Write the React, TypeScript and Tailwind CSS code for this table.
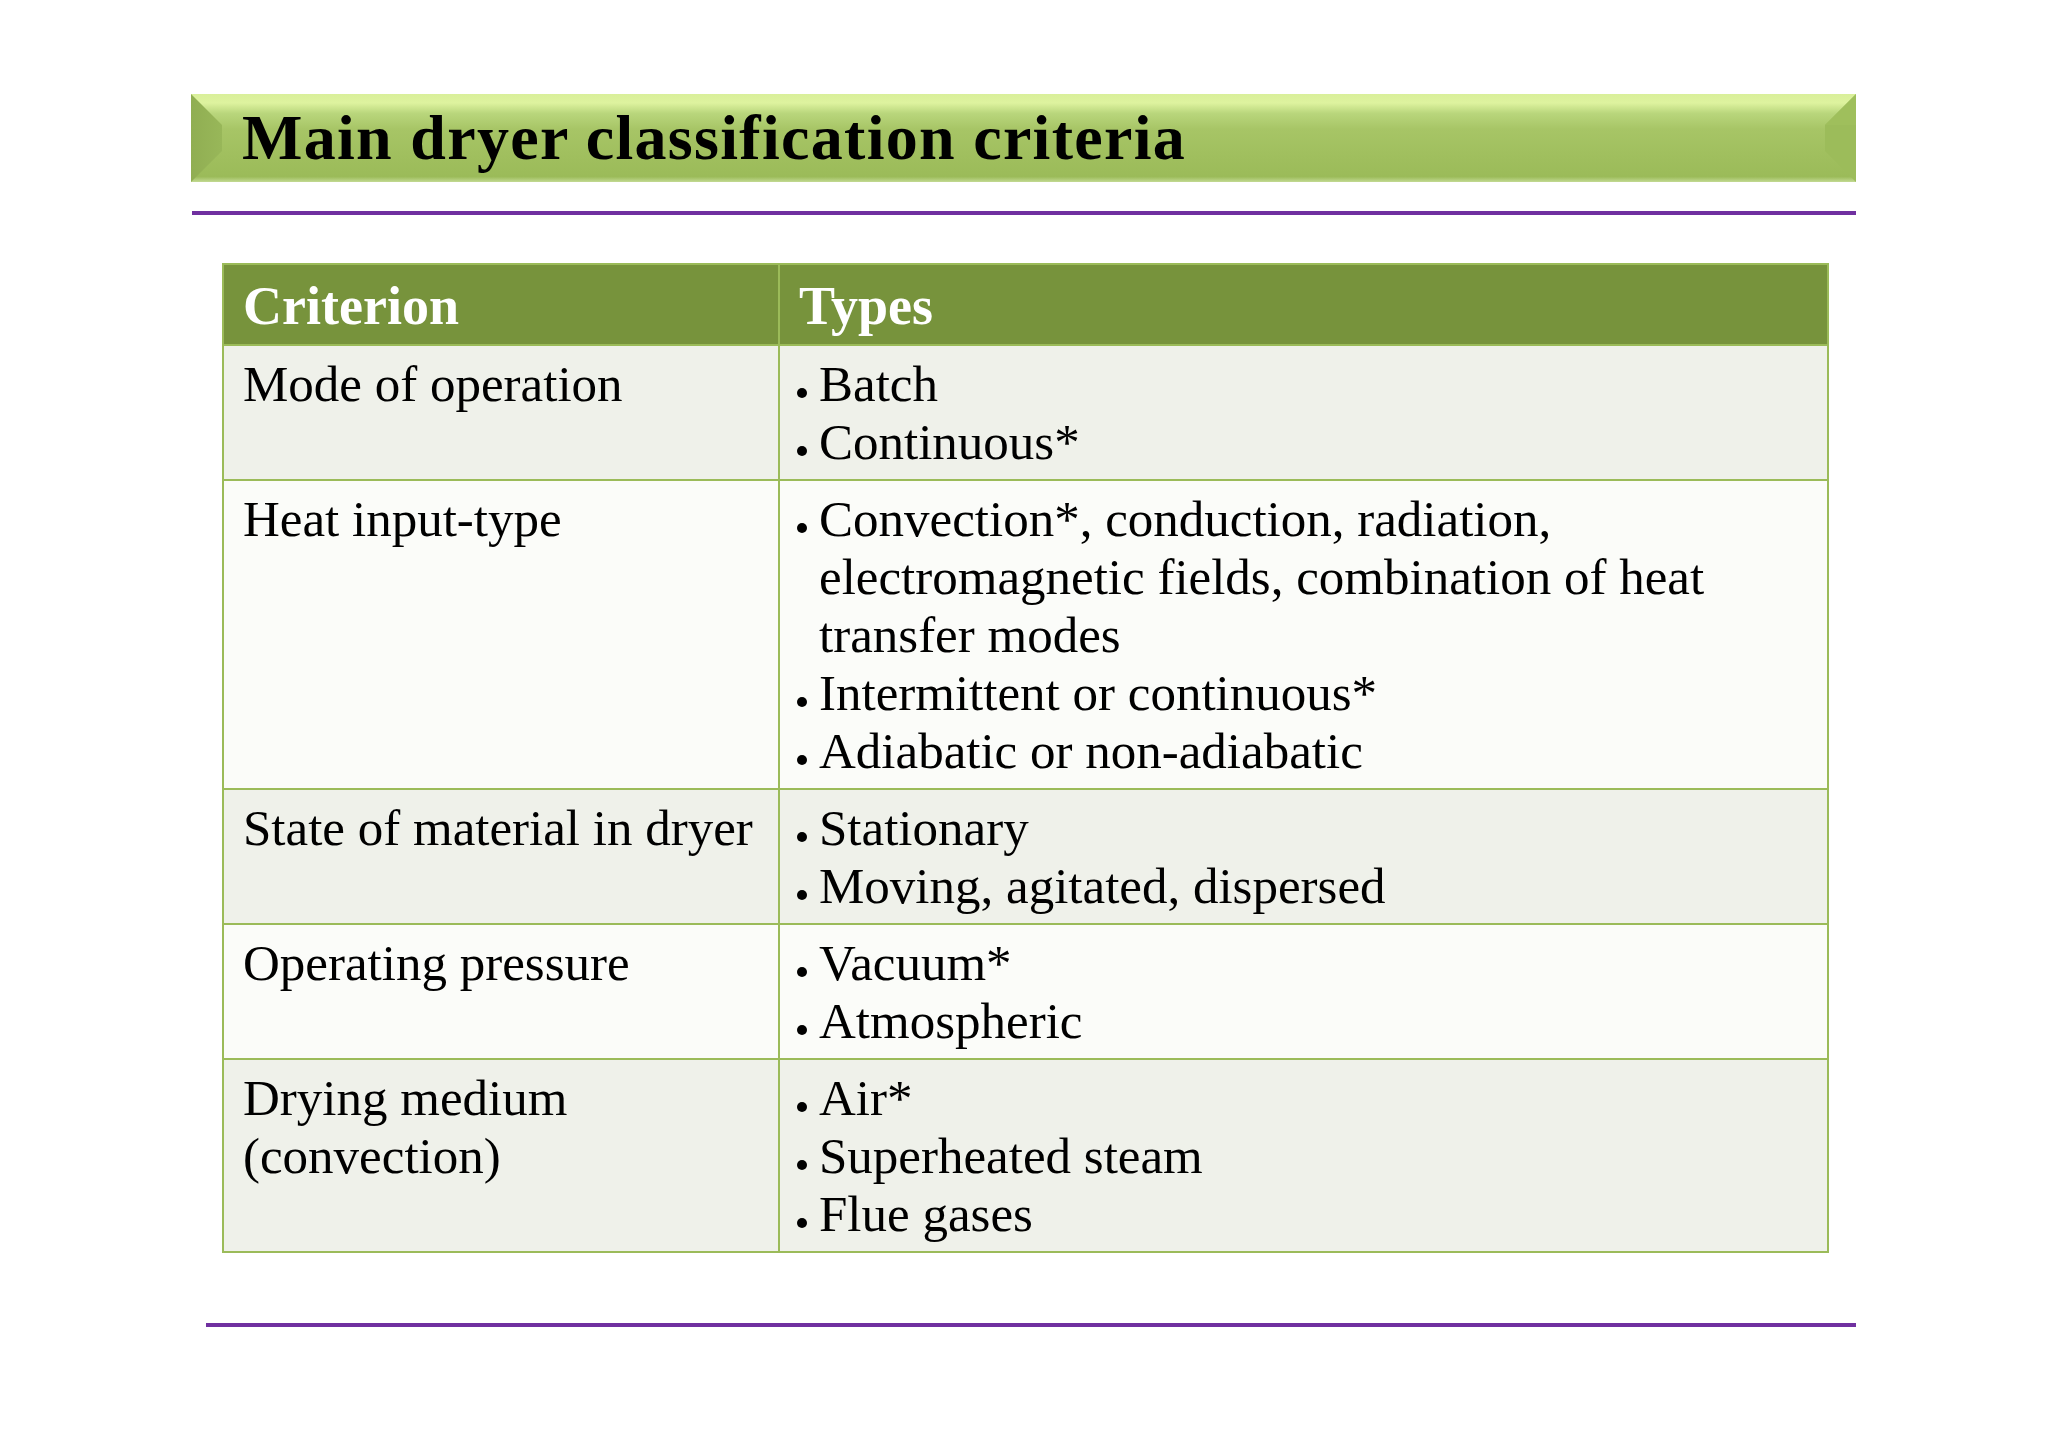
import React from "react";

type Row = { left: string[]; right: string[][]; shaded: boolean };

const rows: Row[] = [
  { left: ["Mode of operation"], right: [["Batch"], ["Continuous*"]], shaded: true },
  {
    left: ["Heat input-type"],
    right: [
      ["Convection*, conduction, radiation,", "electromagnetic fields, combination of heat", "transfer modes"],
      ["Intermittent or continuous*"],
      ["Adiabatic or non-adiabatic"],
    ],
    shaded: false,
  },
  { left: ["State of material in dryer"], right: [["Stationary"], ["Moving, agitated, dispersed"]], shaded: true },
  { left: ["Operating pressure"], right: [["Vacuum*"], ["Atmospheric"]], shaded: false },
  { left: ["Drying medium", "(convection)"], right: [["Air*"], ["Superheated steam"], ["Flue gases"]], shaded: true },
];

function TitleBar() {
  return (
    <div className="relative w-[1665px] h-[88px] flex items-center">
      <svg className="absolute inset-0" width="1665" height="88" viewBox="0 0 1665 88" preserveAspectRatio="none">
        <defs>
          <linearGradient id="tb" x1="0" y1="0" x2="0" y2="1">
            <stop offset="0" stopColor="#d9ef9a" />
            <stop offset="0.1" stopColor="#def39f" />
            <stop offset="0.22" stopColor="#b9d67c" />
            <stop offset="0.4" stopColor="#a7c566" />
            <stop offset="0.7" stopColor="#a0bf5e" />
            <stop offset="0.94" stopColor="#9bbb59" />
            <stop offset="1" stopColor="#c3da93" />
          </linearGradient>
          <linearGradient id="lb" x1="0" y1="0" x2="1" y2="0">
            <stop offset="0" stopColor="#90ae52" />
            <stop offset="1" stopColor="#98b759" />
          </linearGradient>
        </defs>
        <rect x="0" y="0" width="1665" height="88" fill="url(#tb)" />
        <polygon points="0,0 31,31 31,57 0,88" fill="url(#lb)" />
        <polygon points="1665,0 1634,31 1634,57 1665,88" fill="#9cbc5a" />
        <polygon points="1665,0 1634,31 1665,31" fill="#a1c15e" opacity="0.6" />
      </svg>
      <h1 className="relative pl-[51px] text-[64px] leading-none font-bold tracking-[1.3px] text-black whitespace-nowrap">
        Main dryer classification criteria
      </h1>
    </div>
  );
}

function Bullet({ lines }: { lines: string[] }) {
  return (
    <div className="flex pl-[17px]">
      <div className="w-[22px] shrink-0 pt-[33px]">
        <div className="w-[10px] h-[10px] rounded-full bg-black" />
      </div>
      <div>
        {lines.map((l, i) => (
          <div key={i} className="whitespace-nowrap">
            {l}
          </div>
        ))}
      </div>
    </div>
  );
}

export default function App() {
  return (
    <div className="w-[2048px] h-[1448px] bg-white text-black font-['Liberation_Serif','Times_New_Roman',serif] overflow-hidden">
      <div className="pt-[94px] pl-[191px]">
        <TitleBar />
        <div className="mt-[29px] ml-[1px] w-[1664px] h-[4px] bg-[#7030a0]" />

        <div className="mt-[48px] ml-[31px] w-[1607px] border-2 border-[#9bbb59] text-[51px] leading-[58px]">
          <div className="flex h-[79px] bg-[#77933c] text-white font-bold text-[54px]">
            <div className="w-[556px] shrink-0 border-r-2 border-[#9bbb59] pl-[19px] pt-[12px]">Criterion</div>
            <div className="flex-1 pl-[19px] pt-[12px]">Types</div>
          </div>
          {rows.map((r, i) => (
            <div
              key={i}
              className={`flex border-t-2 border-[#9bbb59] ${r.shaded ? "bg-[#eff1ea]" : "bg-[#fbfcf9]"}`}
            >
              <div className="w-[556px] shrink-0 border-r-2 border-[#9bbb59] pl-[19px] pt-[9px] pb-[8px]">
                {r.left.map((l, j) => (
                  <div key={j} className="whitespace-nowrap">
                    {l}
                  </div>
                ))}
              </div>
              <div className="flex-1 pt-[9px] pb-[8px]">
                {r.right.map((b, j) => (
                  <Bullet key={j} lines={b} />
                ))}
              </div>
            </div>
          ))}
        </div>

        <div className="mt-[70px] ml-[15px] w-[1650px] h-[4px] bg-[#7030a0]" />
      </div>
    </div>
  );
}
